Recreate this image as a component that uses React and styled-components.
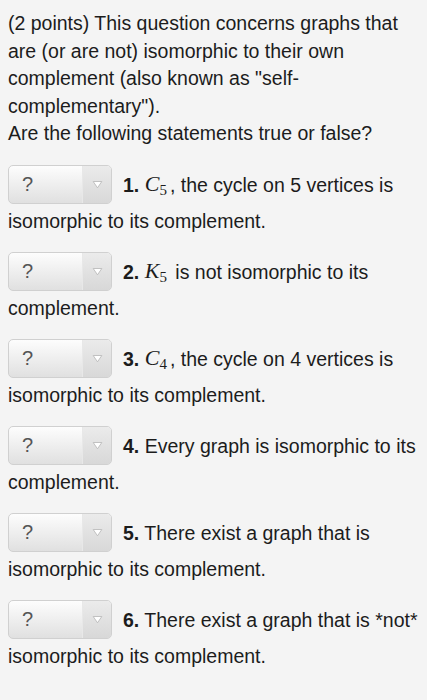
import React from 'react'
import styled, { createGlobalStyle } from 'styled-components'

const GlobalStyle = createGlobalStyle`
    html, body {
        background: #f4f4f4;
    }
    body {
        margin: 10px 4px 8px 8px;
        font-family: "Liberation Sans", Arial, Helvetica, sans-serif;
        font-size: 19.5px;
        line-height: 27.5px;
        color: #1c1c1c;
    }
`

const Intro = styled.p`
    margin: 0 0 17px;
`

const Item = styled.div`
    margin: 0 0 16.5px;
`

const Picker = styled.span`
    display: inline-flex;
    vertical-align: middle;
    width: 104px;
    height: 39px;
    margin: 0 11px 4px 0;
    box-sizing: border-box;
    border: 1px solid #d0d0d0;
    border-radius: 5px;
    background: linear-gradient(#fdfdfd, #e0e0e0);
    overflow: hidden;
`

const PickerValue = styled.span`
    flex: 1;
    padding-left: 13px;
    line-height: 37px;
    font-size: 20px;
    color: #555;
`

const PickerArrow = styled.span`
    width: 28px;
    display: flex;
    align-items: center;
    justify-content: center;
    border-left: 1px solid #e8e8e8;
    background: linear-gradient(#ebebeb, #d8d8d8);
`

const Num = styled.b`
    font-weight: bold;
`

const Math = styled.span`
    font-family: "Liberation Serif", "Times New Roman", serif;
    font-style: italic;
    font-size: 22px;
    margin-right: 3px;

    sub {
        font-style: normal;
        font-size: 15px;
        vertical-align: -4px;
        line-height: 0;
    }
`

function Arrow() {
    return (
        <svg width="11" height="9" viewBox="0 0 11 9">
            <path d="M1.2 1.5 L9.8 1.5 L5.5 7.8 Z" fill="#fff" stroke="#b5b5b5" strokeWidth="0.8" strokeLinejoin="round" />
        </svg>
    )
}

function Select() {
    return (
        <Picker>
            <PickerValue>?</PickerValue>
            <PickerArrow><Arrow /></PickerArrow>
        </Picker>
    )
}

const items = [
    { n: 1, math: ['C', '5'], text: ', the cycle on 5 vertices is isomorphic to its complement.' },
    { n: 2, math: ['K', '5'], text: ' is not isomorphic to its complement.' },
    { n: 3, math: ['C', '4'], text: ', the cycle on 4 vertices is isomorphic to its complement.' },
    { n: 4, text: 'Every graph is isomorphic to its complement.' },
    { n: 5, text: 'There exist a graph that is isomorphic to its complement.' },
    { n: 6, text: 'There exist a graph that is *not* isomorphic to its complement.' },
]

export default function App() {
    return (
        <>
            <GlobalStyle />
            <Intro>
                (2 points) This question concerns graphs that are (or are not) isomorphic to their own complement (also known as "self-complementary").
                <br />
                Are the following statements true or false?
            </Intro>
            {items.map(item => (
                <Item key={item.n}>
                    <Select />
                    <Num>{item.n}.</Num>{' '}
                    {item.math && <Math>{item.math[0]}<sub>{item.math[1]}</sub></Math>}
                    {item.text}
                </Item>
            ))}
        </>
    )
}
